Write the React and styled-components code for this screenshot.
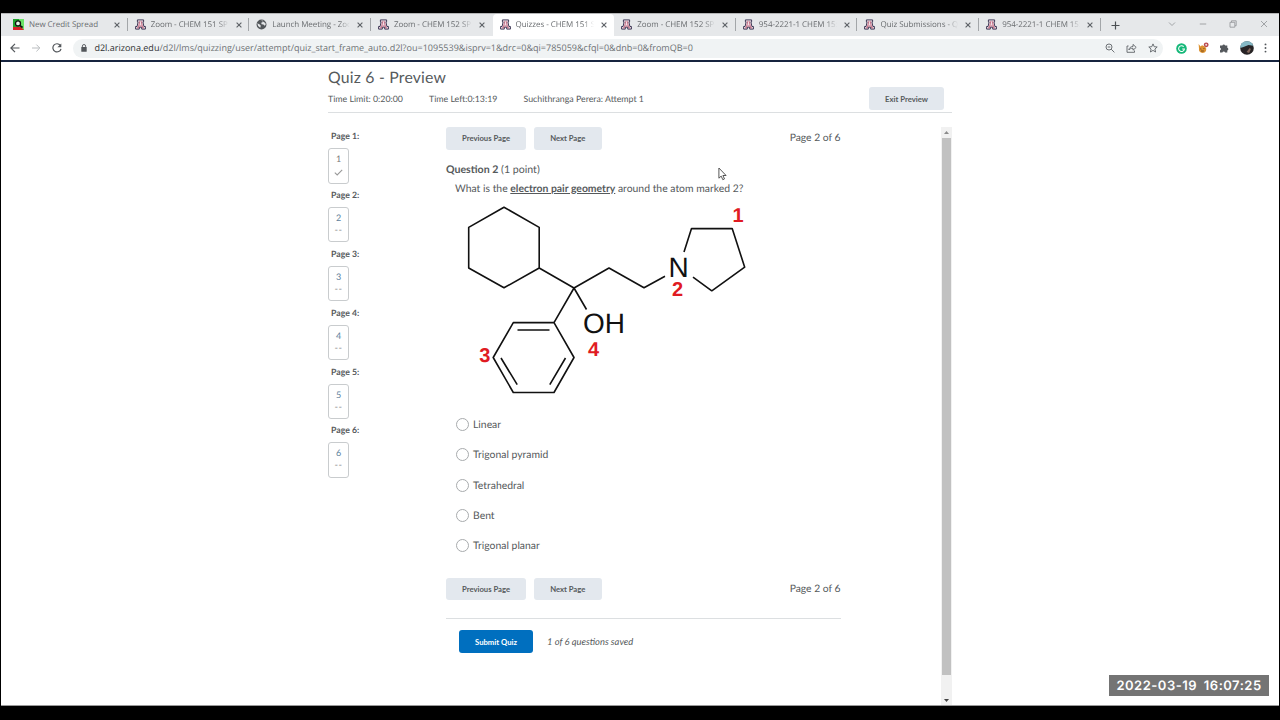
import React from 'react';
import styled, { createGlobalStyle, css } from 'styled-components';

const tabs = [
  { title: 'New Credit Spread', icon: 'search' },
  { title: 'Zoom - CHEM 151 SP', icon: 'ua' },
  { title: 'Launch Meeting - Zoo', icon: 'globe' },
  { title: 'Zoom - CHEM 152 SP', icon: 'ua', last: true },
  { title: 'Quizzes - CHEM 151 S', icon: 'ua', active: true },
  { title: 'Zoom - CHEM 152 SP', icon: 'ua' },
  { title: '954-2221-1 CHEM 15:', icon: 'ua' },
  { title: 'Quiz Submissions - Q', icon: 'ua' },
  { title: '954-2221-1 CHEM 15:', icon: 'ua' },
];

const answers = ['Linear', 'Trigonal pyramid', 'Tetrahedral', 'Bent', 'Trigonal planar'];

const TabIcon = ({ type }) => {
  if (type === 'search') {
    return (
      <svg width='11' height='11' viewBox='0 0 11 11'>
        <rect width='11' height='11' fill='#6be368' />
        <path d='M0 0h6v8H0z' fill='#1fa32f' />
        <path d='M0 8h8l3 3H0z' fill='#d9222a' />
        <circle cx='5' cy='4.4' r='2.5' fill='#e8f7e8' stroke='#111' strokeWidth='1.3' />
        <path d='M6.6 6.3l3 2.2' stroke='#111' strokeWidth='1.6' />
      </svg>
    );
  }
  if (type === 'globe') {
    return (
      <svg width='11' height='11' viewBox='0 0 10 10'>
        <circle cx='5' cy='5' r='4.5' fill='#53575b' />
        <path d='M1.2 3.9l2.2 1 1 1.2-.5 1.8-2-1.6zM4.6 1.4l2 .2-.3 1.2-1.6.7.4 1.2 1.7.2 1 1.2 1-.8-.3-1.6' fill='#e4e6e8' />
      </svg>
    );
  }
  return (
    <svg width='11' height='11' viewBox='0 0 11 11'>
      <path
        d='M2.4.9h6.2v1.9h-.7l1 4.7h1.5v2.6H6.7V8.2H4.3v1.9H.6V7.5h1.5l1-4.7h-.7z'
        fill='#f2dfe5'
        stroke='#2d2747'
        strokeWidth='.9'
      />
      <path d='M2 8.9h1.3l1.5-6.7M9 8.9H7.7L6.2 2.2M4.4 7h2.3' fill='none' stroke='#b8536f' strokeWidth='.8' />
    </svg>
  );
};

const CloseIcon = () => (
  <svg width='6' height='6' viewBox='0 0 6 6'>
    <path d='M.6.6l4.8 4.8M5.4.6L.6 5.4' stroke='#5f6368' strokeWidth='1.15' />
  </svg>
);

const Molecule = () => (
  <Drawing width='300' height='200' viewBox='455 200 300 200'>
    <g fill='none' stroke='#111' strokeWidth='1.6' strokeLinejoin='round'>
      <path d='M504 207.2L539.2 227.4V268L504 287.8L468.7 268V227.4Z' />
      <path d='M539.2 268L574 288L609 268L644 287.8L665 276.2' />
      <path d='M574 288L586.5 309.5M574 288L554 322.6' />
      <path d='M554 322.6H513.3L493.2 357.5L513.3 392.5H554L574 357.5Z' />
      <path d='M549.5 330H517.5M501 358L517.2 384.7M565.5 358L549.8 384.7' />
      <path d='M684 252L691.5 228.6H732.2L744.7 267.2L711.8 290.8L693 277.2' />
    </g>
    <Atom x='668.6' y='277.2'>N</Atom>
    <Atom x='583' y='332.8'>OH</Atom>
    <Marker x='732.5' y='222'>1</Marker>
    <Marker x='672' y='296'>2</Marker>
    <Marker x='479.3' y='362'>3</Marker>
    <Marker x='588' y='356'>4</Marker>
  </Drawing>
);

const PageNav = () => (
  <NavRow>
    <Button width={80}>Previous Page</Button>
    <Button width={67.5}>Next Page</Button>
    <PageCount>Page 2 of 6</PageCount>
  </NavRow>
);

const App = () => (
  <>
    <GlobalStyle />
    <Screen>
      <TabBar>
        {tabs.map((tab, i) => (
          <Tab key={i} active={tab.active ? 1 : 0} divider={tab.active || tab.last ? 0 : 1}>
            <TabIcon type={tab.icon} />
            <TabTitle fade={i > 0 ? 1 : 0}>{tab.title}</TabTitle>
            <CloseIcon />
          </Tab>
        ))}
        <NewTab width='9' height='9' viewBox='0 0 9 9'>
          <path d='M4.5.5v8M.5 4.5h8' stroke='#4b4f53' strokeWidth='1.2' />
        </NewTab>
        <WindowControls>
          <svg width='8' height='10' viewBox='0 0 8 10'>
            <path d='M1 3.5l3 3 3-3' />
          </svg>
          <svg width='8' height='10' viewBox='0 0 8 10'>
            <path d='M.8 5h6.4' />
          </svg>
          <svg width='8' height='10' viewBox='0 0 8 10'>
            <path d='M1 3.3h4.8v4.9H1zM2.5 3.2V1.8h4.7v4.9H6' />
          </svg>
          <svg width='8' height='10' viewBox='0 0 8 10'>
            <path d='M1 2l6 6M7 2L1 8' />
          </svg>
        </WindowControls>
      </TabBar>

      <Toolbar>
        <NavIcons>
          <svg width='10' height='10' viewBox='0 0 10 10'>
            <path d='M9.5 5H1M5 .9L.9 5 5 9.1' stroke='#53575b' />
          </svg>
          <svg width='10' height='10' viewBox='0 0 10 10'>
            <path d='M1 5h7.6M5.4 1.6L8.8 5 5.4 8.4' stroke='#b9bcbf' strokeWidth='1' />
          </svg>
          <svg width='10' height='10' viewBox='0 0 10 10'>
            <path d='M8.3 2.4A4.1 4.1 0 1 0 9 5.8' stroke='#53575b' />
            <path d='M9.3.4v3.9H5.4z' fill='#53575b' />
          </svg>
        </NavIcons>
        <AddressBar>
          <svg width='6' height='8' viewBox='0 0 6 8'>
            <rect x='.3' y='3' width='5.4' height='4.8' rx='.6' fill='#53575b' />
            <path d='M1.4 3.2V2.1a1.6 1.6 0 0 1 3.2 0v1.1' fill='none' stroke='#53575b' strokeWidth='.9' />
          </svg>
          <Url>
            <b>d2l.arizona.edu</b>
            /d2l/lms/quizzing/user/attempt/quiz_start_frame_auto.d2l?ou=1095539&amp;isprv=1&amp;drc=0&amp;qi=785059&amp;cfql=0&amp;dnb=0&amp;fromQB=0
          </Url>
          <AddressIcons>
            <svg width='10' height='10' viewBox='0 0 10 10'>
              <circle cx='4' cy='4' r='3' />
              <path d='M6.2 6.2l3.2 3.2M2.7 4h2.6' />
            </svg>
            <svg width='11' height='10' viewBox='0 0 11 10'>
              <path d='M2.6 3H1v6.3h7.5V7.5M2.8 7C3.2 4.8 4.6 3.6 7 3.5V1.4L10.2 4.4 7 7.2V5.3C5 5.2 3.8 5.7 2.8 7z' />
            </svg>
            <svg width='10' height='10' viewBox='0 0 10 10'>
              <path d='M5 .9l1.2 2.8 3 .3-2.3 2 .7 3L5 7.4 2.4 9l.7-3L.8 4l3-.3z' />
            </svg>
          </AddressIcons>
        </AddressBar>
        <Extensions>
          <svg width='11' height='11' viewBox='0 0 11 11'>
            <circle cx='5.5' cy='5.5' r='5.3' fill='#15b879' />
            <path d='M7.7 3.7A2.9 2.9 0 1 0 8.4 6H6.2' fill='none' stroke='#fff' strokeWidth='1.1' />
          </svg>
          <svg width='11' height='12' viewBox='0 0 11 12'>
            <path d='M.6 2l2 2.4L4 3.2 6 4l2 1.8c.8 2.5-.4 5-3.3 5.2C1.8 11 .5 9 1 6.6z' fill='#dc9130' />
            <path d='M2.2 6.8l1.2.4M5.4 6.6l1.1-.2M3 9h2.8' stroke='#71451a' strokeWidth='.9' />
            <circle cx='8.2' cy='2.8' r='2.4' fill='#b9474c' />
            <circle cx='8.2' cy='2.8' r='1' fill='#efdede' />
          </svg>
          <svg width='10' height='10' viewBox='0 0 10 10'>
            <path d='M1 2.5h2.4a1.4 1.4 0 0 1 2.7 0h2.2v2.3a1.4 1.4 0 0 1 0 2.7v2H6.1a1.4 1.4 0 0 0-2.7 0H1V7.2a1.3 1.3 0 0 0 0-2.5z' fill='#55595d' />
          </svg>
          <svg width='14' height='14' viewBox='0 0 14 14'>
            <circle cx='7' cy='7' r='6.8' fill='#272325' />
            <path d='M.2 7A6.8 6.8 0 0 1 13.4 4.7L8.5 4 3.5 6z' fill='#85b8c5' />
            <path d='M6.5 11l3.2-4 1.2 1-1.8 4z' fill='#82665b' />
          </svg>
          <svg width='3' height='10' viewBox='0 0 3 10'>
            <g fill='#53575b'>
              <circle cx='1.5' cy='1.4' r='.95' />
              <circle cx='1.5' cy='5' r='.95' />
              <circle cx='1.5' cy='8.6' r='.95' />
            </g>
          </svg>
        </Extensions>
      </Toolbar>

      <Page>
        <Header>
          <Title>Quiz 6 - Preview</Title>
          <Info>
            <Limit>Time Limit: 0:20:00</Limit>
            <Left>Time Left:0:13:19</Left>
            <span>Suchithranga Perera: Attempt 1</span>
            <Exit width={75}>Exit Preview</Exit>
          </Info>
        </Header>
        <Body>
          <Sidebar>
            {[1, 2, 3, 4, 5, 6].map((n) => (
              <PageGroup key={n}>
                <PageLabel>Page {n}:</PageLabel>
                <QuestionBox done={n === 1 ? 1 : 0}>
                  {n}
                  {n === 1 ? (
                    <svg width='9' height='7' viewBox='0 0 9 7'>
                      <path d='M.8 3.6l2.4 2.3L8.2.8' fill='none' stroke='#999' strokeWidth='1.1' />
                    </svg>
                  ) : (
                    <Dashes>--</Dashes>
                  )}
                </QuestionBox>
              </PageGroup>
            ))}
          </Sidebar>
          <Content>
            <PageNav />
            <QuestionTitle>
              <b>Question 2</b> (1 point)
            </QuestionTitle>
            <QuestionText>
              What is the <u>electron pair geometry</u> around the atom marked 2?
            </QuestionText>
            <Molecule />
            <Answers>
              {answers.map((answer) => (
                <Answer key={answer}>
                  <Radio type='radio' name='answer' />
                  <span>{answer}</span>
                </Answer>
              ))}
            </Answers>
            <PageNav />
            <Footer>
              <Button primary={1} width={74}>
                Submit Quiz
              </Button>
              <Saved>1 of 6 questions saved</Saved>
            </Footer>
          </Content>
          <Scrollbar>
            <Arrow viewBox='0 0 5 3'>
              <path d='M0 3L2.5 0 5 3z' fill='#8b8b8b' />
            </Arrow>
            <Thumb />
            <Arrow viewBox='0 0 5 3'>
              <path d='M0 0L2.5 3 5 0z' fill='#444' />
            </Arrow>
          </Scrollbar>
        </Body>
      </Page>
      <Timestamp>2022-03-19 16:07:25</Timestamp>
      <Cursor width='9' height='14' viewBox='0 0 9 14'>
        <path d='M.9 1v10.2l2.3-2.1 1.6 3.6 1.7-.8-1.6-3.4h3.2z' fill='#fff' stroke='#444' strokeWidth='.9' />
      </Cursor>
    </Screen>
  </>
);

const GlobalStyle = createGlobalStyle`
  * {
    box-sizing: border-box;
  }
  body {
    margin: 0;
    background: #000;
    overflow: hidden;
    text-rendering: geometricPrecision;
  }
  svg {
    display: block;
    flex: none;
  }
`;

const Screen = styled.div`
  position: relative;
  display: flex;
  flex-direction: column;
  width: 1280px;
  height: 720px;
  padding: 13px 1px 14px;
  background: #000;
  font-family: Lato, sans-serif;
  color: #565a5c;
`;

const TabBar = styled.div`
  display: flex;
  align-items: center;
  flex: none;
  height: 23px;
  padding-left: 5px;
  background: #e6e8ea;
  border-top: 1px solid #b4b5b6;
`;

const Tab = styled.div`
  display: flex;
  align-items: center;
  flex: none;
  width: 121.65px;
  height: 22px;
  padding: 0 7px 1px;
  position: relative;
  background: ${({ active }) => (active ? '#fff' : 'transparent')};
  border-radius: 4px 4px 0 0;
  ${({ divider }) =>
    divider &&
    css`
      &::after {
        content: '';
        position: absolute;
        right: 0;
        width: 1px;
        height: 13px;
        background: #a3a6a9;
      }
    `}
`;

const TabTitle = styled.span`
  width: 78px;
  margin: 0 7px 0 5px;
  white-space: nowrap;
  font: 8px/12px 'Open Sans', sans-serif;
  letter-spacing: -0.05px;
  color: #6a6d70;
  ${({ fade }) =>
    fade &&
    css`
      mask-image: linear-gradient(to right, #000 86%, transparent 100%);
    `}
`;

const NewTab = styled.svg`
  margin-left: 10px;
`;

const WindowControls = styled.div`
  display: flex;
  gap: 22.6px;
  margin: -3px 11px 0 auto;
  fill: none;
  stroke: #8f9296;
  stroke-width: 0.8;
`;

const Toolbar = styled.div`
  display: flex;
  align-items: center;
  flex: none;
  height: 26px;
  background: #fff;
  border-bottom: 2px solid #17243f;
`;

const NavIcons = styled.div`
  display: flex;
  gap: 11.2px;
  margin-left: 9px;
  fill: none;
  stroke-width: 1.2;
`;

const AddressBar = styled.div`
  display: flex;
  align-items: center;
  width: 1090px;
  height: 19px;
  margin-left: 10.5px;
  padding: 0 5px 0 8px;
  border-radius: 10px;
  background: #f0f3f4;
`;

const Url = styled.span`
  margin-left: 7.5px;
  white-space: nowrap;
  font: 9.04px/14px 'Open Sans', sans-serif;
  color: #6e7275;
  b {
    font-weight: 400;
    color: #303336;
  }
`;

const AddressIcons = styled.div`
  display: flex;
  gap: 11px;
  margin-left: auto;
  fill: none;
  stroke: #5f6368;
  stroke-width: 0.9;
`;

const Extensions = styled.div`
  display: flex;
  align-items: center;
  gap: 10.4px;
  margin: 0 12px 0 auto;
`;

const Page = styled.div`
  display: flex;
  flex-direction: column;
  flex: 1;
  min-height: 0;
  padding-left: 327px;
  background: #fff;
  border-bottom: 1px solid #999;
`;

const Header = styled.div`
  width: 624px;
  height: 51px;
  border-bottom: 1px solid #dcdfe1;
`;

const Title = styled.h1`
  margin: 0;
  padding-top: 6px;
  font-size: 15.8px;
  font-weight: 400;
  line-height: 19px;
  letter-spacing: 0.2px;
`;

const Info = styled.div`
  display: flex;
  align-items: center;
  height: 23px;
  padding-right: 8px;
  font-size: 8.8px;
  white-space: nowrap;
`;

const Limit = styled.span`
  width: 101px;
`;

const Left = styled.span`
  width: 94.5px;
`;

const Button = styled.button`
  width: ${({ width }) => width}px;
  height: 22.5px;
  padding: 0;
  border: none;
  border-radius: 3px;
  font-family: Lato, sans-serif;
  font-size: 7.7px;
  font-weight: 700;
  background: ${({ primary }) => (primary ? '#006fbf' : '#e3e8ee')};
  color: ${({ primary }) => (primary ? '#fff' : '#565a5c')};
`;

const Exit = styled(Button)`
  margin-left: auto;
`;

const Body = styled.div`
  display: flex;
  flex: 1;
  min-height: 0;
  width: 624px;
  padding-top: 14px;
`;

const Sidebar = styled.div`
  width: 118px;
`;

const PageGroup = styled.div`
  height: 58.9px;
`;

const PageLabel = styled.div`
  height: 21px;
  padding-left: 3px;
  font-size: 8.7px;
  font-weight: 700;
  line-height: 17px;
`;

const QuestionBox = styled.div`
  display: flex;
  flex-direction: column;
  align-items: center;
  width: 21px;
  height: 35.5px;
  border: 1px solid #c9ccce;
  border-radius: 3px;
  padding-top: 4px;
  font-size: 9px;
  line-height: 12px;
  color: ${({ done }) => (done ? '#777' : '#5d7f9c')};
  svg {
    margin-top: 4px;
  }
`;

const Dashes = styled.span`
  margin-top: 1px;
  font-size: 9.5px;
  letter-spacing: 0.5px;
  color: #888;
`;

const Content = styled.div`
  width: 394.5px;
`;

const NavRow = styled.div`
  display: flex;
  align-items: center;
  gap: 8px;
`;

const PageCount = styled.span`
  margin-left: auto;
  font-size: 10.3px;
`;

const QuestionTitle = styled.div`
  margin-top: 12px;
  font-size: 10.6px;
  line-height: 16px;
`;

const QuestionText = styled.div`
  margin-top: 3px;
  padding-left: 9px;
  font-size: 10.4px;
  line-height: 16px;
  white-space: nowrap;
  u {
    font-weight: 700;
  }
`;

const Drawing = styled.svg`
  margin: 3px 0 0 9px;
`;

const Atom = styled.text`
  font: 28px 'Liberation Sans', Arial, sans-serif;
  fill: #111;
`;

const Marker = styled.text`
  font: bold 20px 'Liberation Sans', Arial, sans-serif;
  fill: #e01b22;
`;

const Answers = styled.div`
  display: flex;
  flex-direction: column;
  padding: 10px 0 17px 10px;
`;

const Answer = styled.label`
  display: flex;
  align-items: center;
  height: 30.3px;
  font-size: 10.4px;
  span {
    padding-top: 1px;
  }
`;

const Radio = styled.input`
  appearance: none;
  width: 13px;
  height: 13px;
  margin: 0 4px 0 0;
  border: 1px solid #a8abad;
  border-radius: 50%;
`;

const Footer = styled.div`
  display: flex;
  align-items: center;
  margin-top: 18px;
  padding: 11px 0 0 13px;
  border-top: 1px solid #dcdfe1;
`;

const Saved = styled.span`
  margin-left: 14px;
  padding-top: 1px;
  font-size: 9.4px;
  font-style: italic;
`;

const Scrollbar = styled.div`
  display: flex;
  flex-direction: column;
  align-items: center;
  width: 11px;
  margin-left: auto;
  padding: 4px 0 3px;
  background: #f1f1f1;
`;

const Arrow = styled.svg`
  width: 5px;
  height: 3px;
`;

const Thumb = styled.div`
  width: 9px;
  height: 537px;
  margin: 4px 0 auto;
  background: #c1c1c1;
`;

const Timestamp = styled.div`
  position: absolute;
  left: 1109px;
  top: 675px;
  width: 160px;
  height: 21px;
  background: #747474;
  color: #fff;
  font: 600 13px/22px Inter, sans-serif;
  letter-spacing: 0.5px;
  word-spacing: 3px;
  text-align: center;
  white-space: nowrap;
`;

const Cursor = styled.svg`
  position: absolute;
  left: 718px;
  top: 167px;
`;

export default App;
